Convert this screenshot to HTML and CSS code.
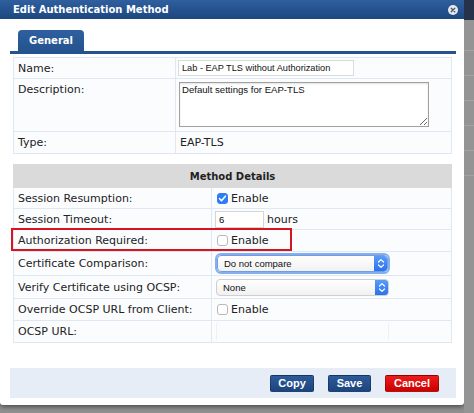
FILE: index.html
```html
<!DOCTYPE html>
<html>
<head>
<meta charset="utf-8">
<link rel="stylesheet" href="styles.css">
</head>
<body>
<div class="screen">
  <div class="dialog">
    <div class="titlebar">
      <span class="title">Edit Authentication Method</span>
      <span class="close"><svg width="10" height="10" viewBox="0 0 10 10"><circle cx="5" cy="5" r="5" fill="#e6e9ee"/><path d="M3.2 3.2 L6.8 6.8 M6.8 3.2 L3.2 6.8" stroke="#4a5566" stroke-width="1.3" stroke-linecap="round"/></svg></span>
    </div>
    <div class="content">
      <div class="tabs"><div class="tab">General</div></div>
      <table class="form t1">
        <tr class="r-name"><td class="lbl">Name:</td><td class="val"><input class="txt" type="text" value="Lab - EAP TLS without Authorization"></td></tr>
        <tr class="r-desc"><td class="lbl top">Description:</td><td class="val top"><textarea class="area">Default settings for EAP-TLS</textarea></td></tr>
        <tr class="r-type"><td class="lbl">Type:</td><td class="val">EAP-TLS</td></tr>
      </table>
      <div class="details">
        <table class="form t2">
          <tr class="hdr"><td colspan="2">Method Details</td></tr>
          <tr class="h20"><td class="lbl">Session Resumption:</td><td class="val"><span class="chk on"><svg width="11" height="11" viewBox="0 0 11 11"><path d="M2.6 5.7 L4.5 7.7 L8.4 3.2" fill="none" stroke="#fff" stroke-width="1.6" stroke-linecap="round" stroke-linejoin="round"/></svg></span><span class="opt">Enable</span></td></tr>
          <tr class="h20"><td class="lbl">Session Timeout:</td><td class="val"><input class="num" type="text" value="6"><span class="unit">hours</span></td></tr>
          <tr class="h21"><td class="lbl">Authorization Required:</td><td class="val"><span class="chk"></span><span class="opt">Enable</span></td></tr>
          <tr class="h23"><td class="lbl">Certificate Comparison:</td><td class="val"><div class="sel focus"><span class="sel-text">Do not compare</span><span class="arrows"><svg width="8" height="11" viewBox="0 0 8 11"><path d="M1.5 4 L4 1.6 L6.5 4 M1.5 7 L4 9.4 L6.5 7" fill="none" stroke="#fff" stroke-width="1.2" stroke-linecap="round" stroke-linejoin="round"/></svg></span></div></td></tr>
          <tr class="h22"><td class="lbl">Verify Certificate using OCSP:</td><td class="val"><div class="sel"><span class="sel-text">None</span><span class="arrows"><svg width="8" height="11" viewBox="0 0 8 11"><path d="M1.5 4 L4 1.6 L6.5 4 M1.5 7 L4 9.4 L6.5 7" fill="none" stroke="#fff" stroke-width="1.2" stroke-linecap="round" stroke-linejoin="round"/></svg></span></div></td></tr>
          <tr class="h21"><td class="lbl">Override OCSP URL from Client:</td><td class="val"><span class="chk"></span><span class="opt">Enable</span></td></tr>
          <tr class="h21"><td class="lbl">OCSP URL:</td><td class="val"><div class="ghost"></div></td></tr>
        </table>
        <div class="highlight"></div>
      </div>
      <div class="footer">
        <button class="btn blue">Copy</button>
        <button class="btn blue">Save</button>
        <button class="btn red">Cancel</button>
      </div>
    </div>
  </div>
  <div class="side">
    <div class="side-head"></div>
    <div class="side-line"></div>
    <div class="side-line"></div>
    <div class="side-line"></div>
    <div class="side-line"></div>
    <div class="side-line"></div>
    <div class="side-line"></div>
  </div>
</div>
</body>
</html>
```

FILE: styles.css
```css
html, body {
  margin: 0;
  padding: 0;
}
body {
  width: 474px;
  height: 413px;
  overflow: hidden;
  background: #8f8f8f;
  font-family: "DejaVu Sans", Verdana, sans-serif;
  font-size: 11px;
  color: #222;
}
.screen {
  display: flex;
  align-items: flex-start;
  height: 413px;
}
.dialog {
  width: 464px;
  height: 405px;
  flex: none;
  background: #fff;
  box-shadow: 0 2px 4px rgba(0,0,0,0.45);
  border-radius: 0 0 3px 3px;
  display: flex;
  flex-direction: column;
}
.titlebar {
  height: 19px;
  background: linear-gradient(#2f5f9e, #1d4780);
  display: flex;
  align-items: center;
  justify-content: space-between;
  padding: 0 6px 0 13px;
}
.title {
  color: #fff;
  font-weight: bold;
  font-size: 10px;
}
.close {
  display: flex;
}
.content {
  padding: 11px 8px 0 10px;
  display: flex;
  flex-direction: column;
}
.tabs {
  border-bottom: 3px solid #24538f;
  padding-left: 8px;
  display: flex;
}
.tab {
  width: 66px;
  height: 21px;
  box-sizing: border-box;
  background: linear-gradient(#2e5f9f, #24538f);
  border-radius: 4px 4px 0 0;
  color: #fff;
  font-weight: bold;
  font-size: 10px;
  display: flex;
  align-items: center;
  justify-content: center;
}
table.form {
  border-collapse: collapse;
  border: 1px solid #dfe7f2;
  margin: 0 4px 0 3px;
  width: 439px;
}
table.form td {
  border: 1px solid #dfe7f2;
  background: #fbfcfe;
  padding: 0 4px;
  vertical-align: middle;
}
td.top {
  vertical-align: top !important;
}
.t1 {
  margin-top: 3px !important;
}
.t1 td.lbl {
  width: 153px;
}
.r-name td { height: 20px; }
.r-desc td { height: 48px; }
.r-desc td.lbl { padding-top: 4px; }
.r-desc td.val { padding-top: 3px; padding-left: 3px; }
.r-type td { height: 21px; }
.txt {
  width: 176px;
  height: 16px;
  box-sizing: border-box;
  border: 1px solid #dcdcdc;
  padding: 0 3px;
  margin-left: -2px;
  font-family: "Liberation Sans", Arial, sans-serif;
  font-size: 9.2px;
  color: #111;
  background: #fff;
  display: block;
}
.area {
  width: 250px;
  height: 45px;
  box-sizing: border-box;
  border: 1px solid #a0a0a0;
  box-shadow: inset 0 1px 2px rgba(0,0,0,0.12);
  padding: 1px 2px;
  font-family: "Liberation Sans", Arial, sans-serif;
  font-size: 9.6px;
  color: #111;
  resize: both;
  display: block;
  margin: 0;
}
.details {
  position: relative;
  margin-top: 10px;
}
.t2 td.lbl {
  width: 189px;
}
.t2 tr.h20 td { height: 20px; }
.t2 tr.h21 td { height: 21px; }
.t2 tr.h22 td { height: 22px; }
.t2 tr.h23 td { height: 23px; }
.t2 tr.hdr td {
  background: #dadada;
  border-color: #dadada;
  text-align: center;
  font-weight: bold;
  font-size: 10px;
  height: 22px;
}
.t2 td.val {
  padding-left: 3px;
}
.chk {
  display: inline-flex;
  vertical-align: -2px;
  width: 11px;
  height: 11px;
  box-sizing: border-box;
  border: 1px solid #b9b9b9;
  border-radius: 3px;
  background: #fff;
  margin: 0 3px 0 2px;
}
.chk.on {
  background: #2f7cf6;
  border-color: #2f7cf6;
}
.chk.on svg {
  margin: -1px;
}
.num {
  width: 49px;
  height: 17px;
  box-sizing: border-box;
  border: 1px solid #d5d5d5;
  padding: 0 3px;
  font-family: "Liberation Sans", Arial, sans-serif;
  font-size: 9.5px;
  vertical-align: middle;
  margin: 0 3px 0 0;
}
.unit {
  vertical-align: middle;
}
.sel {
  width: 173px;
  height: 17px;
  box-sizing: border-box;
  border: 1px solid #cfcfcf;
  border-radius: 4px;
  background: linear-gradient(#ffffff, #f1f1f1);
  display: flex;
  align-items: center;
  justify-content: space-between;
  padding-left: 6px;
  margin-left: 1px;
  font-family: "Liberation Sans", Arial, sans-serif;
  font-size: 9.5px;
  color: #111;
}
.sel.focus {
  width: 171px;
  box-shadow: 0 0 0 2px #86aeea;
  border-color: #6f9ee6;
  margin-left: 2px;
}
.arrows {
  width: 13px;
  height: 15px;
  background: linear-gradient(#5a9cf8, #2a72ee);
  border-radius: 0 3px 3px 0;
  display: flex;
  align-items: center;
  justify-content: center;
}
.ghost {
  width: 173px;
  height: 17px;
  box-sizing: border-box;
  border-left: 1px solid #eef0f3;
  border-right: 1px solid #eef0f3;
  margin-left: 1px;
}
.highlight {
  position: absolute;
  left: 1px;
  top: 64px;
  width: 281px;
  height: 23px;
  box-sizing: border-box;
  border: 2px solid #d8141e;
}
.footer {
  margin-top: 25px;
  height: 30px;
  background: #e6edf7;
  display: flex;
  align-items: center;
  justify-content: flex-end;
  gap: 14px;
  padding-right: 17px;
}
.btn {
  height: 17px;
  border: 1px solid rgba(0,0,0,0.25);
  border-radius: 2px;
  color: #fff;
  font-family: "Liberation Sans", Arial, sans-serif;
  font-weight: bold;
  font-size: 11px;
  padding: 0;
  cursor: pointer;
}
.btn.blue {
  background: linear-gradient(#2c5b97, #1c4580);
  width: 44px;
}
.btn.blue + .btn.blue {
  width: 43px;
}
.btn.red {
  background: linear-gradient(#ec1c1c, #cc0000);
  width: 54px;
}
.side {
  flex: 1;
  height: 413px;
  background: #949494;
  display: flex;
  flex-direction: column;
}
.side-head {
  height: 20px;
  background: #26324a;
  margin-bottom: 30px;
}
.side-line {
  height: 1px;
  background: #a4a4a4;
  margin-bottom: 24px;
}
```
